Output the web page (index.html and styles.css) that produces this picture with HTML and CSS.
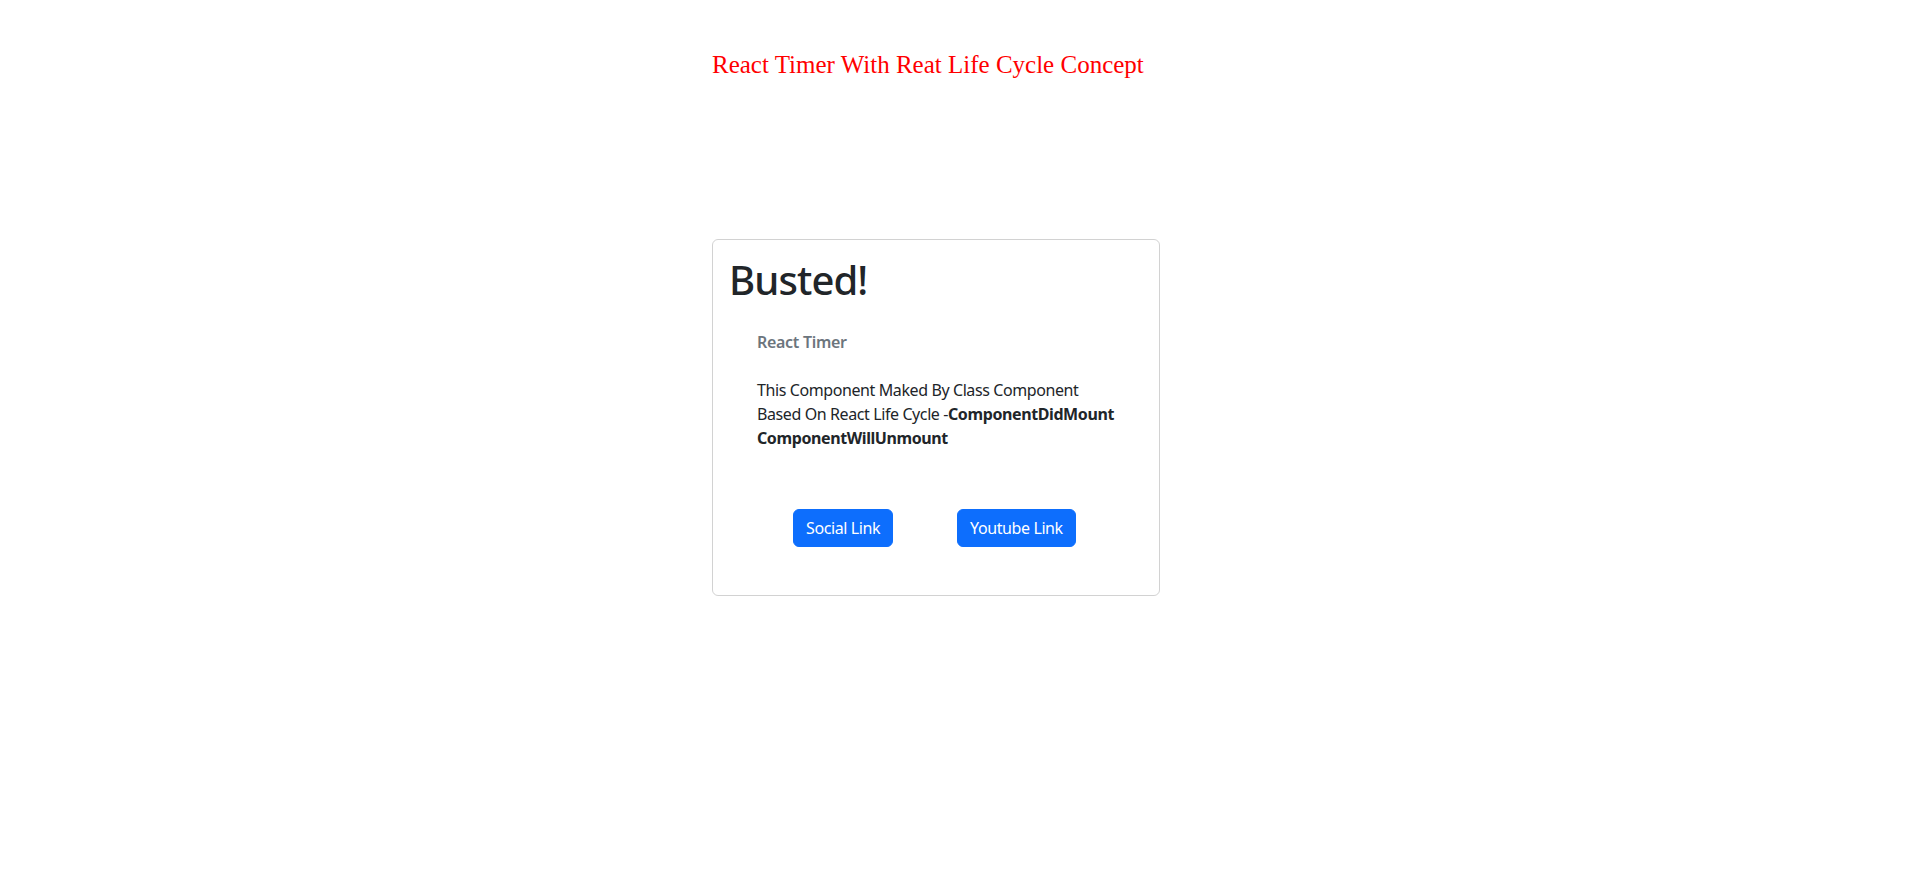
FILE: index.html
```html
<!DOCTYPE html>
<html lang="en">
<head>
<meta charset="utf-8">
<title>React Timer</title>
<link rel="stylesheet" href="styles.css">
</head>
<body>
<div class="wrap">
  <h2 class="title">React Timer With Reat Life Cycle Concept</h2>
  <div class="card">
    <div class="card-body">
      <h1 class="heading">Busted!</h1>
      <div class="inner">
        <h6 class="subtitle">React Timer</h6>
        <p class="text">This Component Maked By Class Component<br>Based On React Life Cycle -<b>ComponentDidMount</b><br><b>ComponentWillUnmount</b></p>
      </div>
      <div class="actions">
        <a class="btn" href="#">Social Link</a>
        <a class="btn" href="#">Youtube Link</a>
      </div>
    </div>
  </div>
</div>
</body>
</html>
```
FILE: styles.css
```css
html, body {
  margin: 0;
  padding: 0;
  background: #fff;
}
body {
  font-family: "Noto Sans", "Open Sans", sans-serif;
  color: #212529;
  font-size: 16px;
  line-height: 1.5;
}
.wrap {
  width: 448px;
  margin-left: 712px;
  padding-top: 50px;
}
.title {
  font-family: "Liberation Serif", "Times New Roman", serif;
  font-weight: normal;
  color: #ff0000;
  font-size: 25px;
  line-height: 30px;
  margin: 0 0 159px 0;
}
.card {
  border: 1px solid rgba(0, 0, 0, 0.175);
  border-radius: 6px;
  box-sizing: border-box;
  height: 357px;
}
.card-body {
  padding: 16px;
}
.heading {
  font-size: 40px;
  font-weight: 500;
  line-height: 1.2;
  margin: 0 0 26px 0;
  letter-spacing: -0.9px;
}
.inner {
  padding: 0 28px;
}
.subtitle {
  font-size: 16px;
  font-weight: 600;
  color: #6c757d;
  line-height: 1.5;
  margin: 0 0 24px 0;
  letter-spacing: -0.3px;
}
.text {
  margin: 0;
  font-size: 16px;
  line-height: 24px;
  letter-spacing: -0.4px;
}
.text b {
  font-weight: 700;
}
.actions {
  display: flex;
  gap: 64px;
  padding-left: 64px;
  margin-top: 59px;
}
.btn {
  display: inline-block;
  background: #0d6efd;
  color: #fff;
  text-decoration: none;
  padding: 6px 12px;
  border-radius: 6px;
  font-size: 16px;
  line-height: 24px;
  border: 1px solid #0d6efd;
  letter-spacing: -0.4px;
}
```
